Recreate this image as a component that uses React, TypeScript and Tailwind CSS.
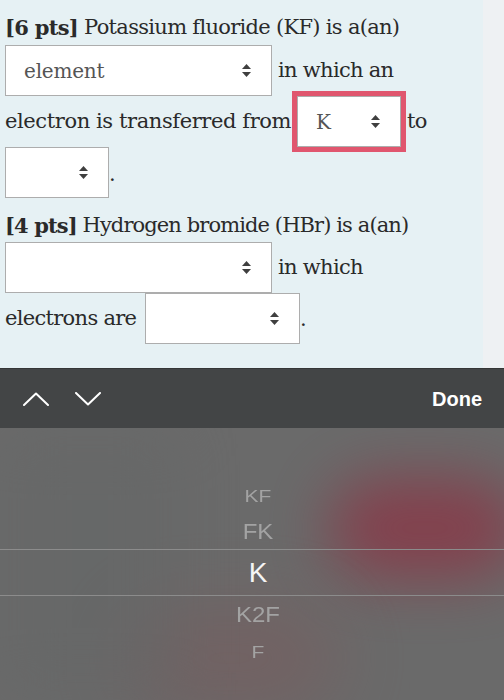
import type { ReactNode } from "react";

const serif = { fontFamily: '"DejaVu Serif", "Liberation Serif", serif' };
const sans = { fontFamily: '"Liberation Sans", Arial, sans-serif' };

function Arrows() {
  return (
    <svg width="11" height="15" viewBox="0 0 11 15" className="shrink-0">
      <path d="M5.5 1 L10 6 H1 Z" fill="#3f3f3f" />
      <path d="M5.5 14 L10 9 H1 Z" fill="#3f3f3f" />
    </svg>
  );
}

function Select({
  width,
  value,
  focused,
}: {
  width: string;
  value?: string;
  focused?: boolean;
}) {
  return (
    <div
      className={`flex h-[51px] shrink-0 items-center justify-between border border-[#adadad] bg-white pl-[18px] pr-[19px] ${width} ${
        focused ? "outline-[5px] outline-solid outline-[#e0566e]" : ""
      }`}
    >
      <span className="text-[20px] tracking-[-0.2px] text-[#555]">{value ?? ""}</span>
      <Arrows />
    </div>
  );
}

function Row({ children, className = "" }: { children: ReactNode; className?: string }) {
  return <div className={`flex items-center whitespace-nowrap ${className}`}>{children}</div>;
}

function Chevron({ up }: { up?: boolean }) {
  return (
    <svg width="26" height="14" viewBox="0 0 26 14">
      <path
        d={up ? "M1 13 L13 1.5 L25 13" : "M1 1 L13 12.5 L25 1"}
        fill="none"
        stroke="white"
        strokeWidth="2"
        strokeLinecap="round"
        strokeLinejoin="round"
      />
    </svg>
  );
}

export default function App() {
  return (
    <div className="flex h-[700px] w-[504px] flex-col overflow-hidden bg-[#eef1f3]">
      <div
        className="flex h-[368px] w-[483px] shrink-0 flex-col bg-[#e6f1f4] pl-[5px] pt-[10px] text-[21px] tracking-[-0.7px] text-[#2a2a2a]"
        style={serif}
      >
        <Row className="h-[35px]">
          <span className="font-bold">[6 pts]</span>&nbsp;Potassium fluoride (KF) is a(an)
        </Row>
        <Row className="h-[51px]">
          <Select width="w-[267px]" value="element" />
          <span className="ml-[6px]">in which an</span>
        </Row>
        <Row className="h-[51px]">
          <span className="w-[292px] tracking-[-0.4px]">electron is transferred from</span>
          <Select width="w-[104px]" value="K" focused />
          <span className="ml-[6px]">to</span>
        </Row>
        <Row className="h-[51px]">
          <Select width="w-[104px]" />
          <span className="self-end pb-[8px]">.</span>
        </Row>
        <Row className="h-[44px] pt-[12px] tracking-[-0.9px]">
          <span className="font-bold">[4 pts]</span>&nbsp;Hydrogen bromide (HBr) is a(an)
        </Row>
        <Row className="h-[51px]">
          <Select width="w-[267px]" />
          <span className="ml-[6px]">in which</span>
        </Row>
        <Row className="h-[51px]">
          <span className="w-[140px]">electrons are</span>
          <Select width="w-[155px]" />
          <span className="self-end pb-[9px]">.</span>
        </Row>
      </div>

      <div
        className="flex h-[60px] shrink-0 items-center border-t border-[#353636] bg-[#434546] pl-[23px] pr-[22px]"
        style={sans}
      >
        <div className="flex items-center gap-[26px]">
          <Chevron up />
          <Chevron />
        </div>
        <span className="ml-auto text-[20px] font-bold text-white">Done</span>
      </div>

      <div className="relative flex-1 overflow-hidden bg-[#6a6a6a]" style={sans}>
        <div className="absolute left-[330px] top-[50px] h-[100px] w-[190px] rounded-full bg-[#8a3646] opacity-80 blur-[30px]" />
        <div className="absolute left-[120px] top-[175px] h-[110px] w-[220px] rounded-full bg-[#7a5a5c] opacity-50 blur-[35px]" />
        <div className="absolute left-0 top-0 h-full w-[180px] bg-[#656767] opacity-60 blur-[30px]" />
        <div className="relative flex flex-col items-center pt-[50px] text-[#a3a3a3]">
          <div className="ml-[12px] flex h-[36px] items-center text-[21px] [transform:scaleY(0.8)]">KF</div>
          <div className="ml-[12px] flex h-[35px] items-center text-[24px] [transform:scaleY(0.9)]">FK</div>
          <div className="flex h-[47px] w-full items-center justify-center border-y border-[#8c8c8c] pl-[12px] text-[28px] text-[#f4f4f4]">
            K
          </div>
          <div className="ml-[12px] flex h-[38px] items-center text-[24px] [transform:scaleY(0.9)]">K2F</div>
          <div className="ml-[12px] flex h-[36px] items-center text-[21px] [transform:scaleY(0.8)]">F</div>
        </div>
      </div>
    </div>
  );
}
